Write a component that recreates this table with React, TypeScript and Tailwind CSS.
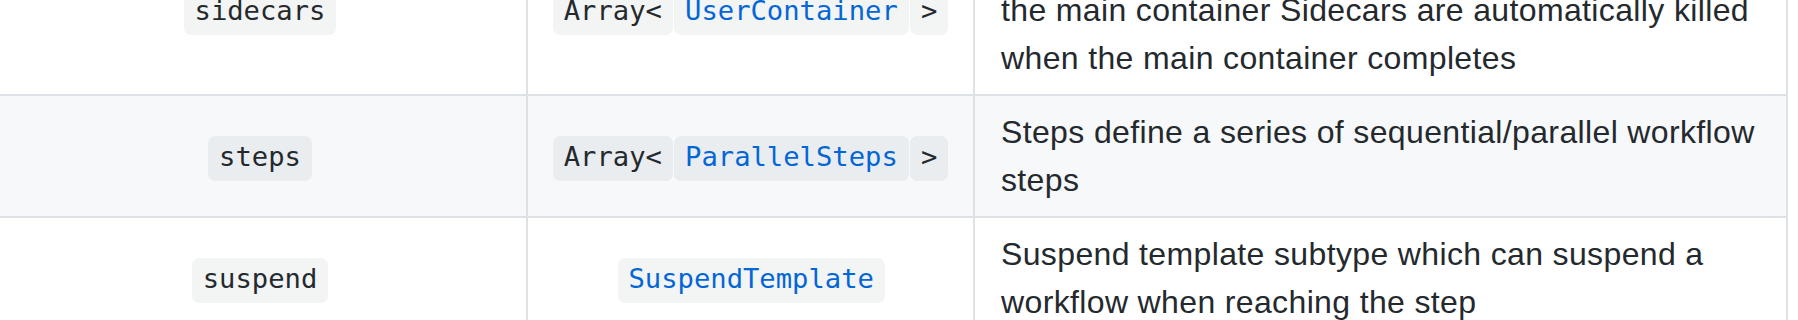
const rows = [
  {
    name: "sidecars",
    type: { wrap: true, ref: "UserContainer" },
    desc: [
      "Sidecars is a list of containers which run alongside",
      "the main container Sidecars are automatically killed",
      "when the main container completes",
    ],
  },
  {
    name: "steps",
    type: { wrap: true, ref: "ParallelSteps" },
    desc: ["Steps define a series of sequential/parallel workflow steps"],
  },
  {
    name: "suspend",
    type: { wrap: false, ref: "SuspendTemplate" },
    desc: ["Suspend template subtype which can suspend a workflow when reaching the step"],
  },
];

const codeCls =
  "font-['DejaVu_Sans_Mono',monospace] text-[27.2px] tracking-normal px-[10.88px] pt-[5.44px] pb-[9px] rounded-[7px] bg-[rgba(27,31,35,0.05)]";

const FieldTable = () => {
  return (
    <div className="bg-white w-[1798px] h-[320px] overflow-hidden">
      <div className="-mt-[74px] -ml-[8px] w-[1796px] border-l-2 border-[#dfe2e5] font-['Liberation_Sans',Arial,sans-serif] text-[32px] leading-[48px] tracking-[0.36px] text-[#24292e]">
        {rows.map((row, i) => (
          <div
            key={row.name}
            className={`grid grid-cols-[534px_447px_813px] border-b-2 border-[#dfe2e5] ${
              i % 2 === 1 ? "bg-[#f6f8fa]" : "bg-white"
            }`}
          >
            {/* Name */}
            <div className="flex items-center justify-center border-r-2 border-[#dfe2e5] px-[26px] py-[12px]">
              <div>
                <code className={codeCls}>{row.name}</code>
              </div>
            </div>

            {/* Type */}
            <div className="flex items-center justify-center border-r-2 border-[#dfe2e5] px-[26px] py-[12px]">
              <div className="whitespace-nowrap">
                {row.type.wrap && <code className={codeCls}>Array&lt;</code>}
                <a href="#" className="text-[#0366d6] ml-[1.4px]">
                  <code className={codeCls}>{row.type.ref}</code>
                </a>
                {row.type.wrap && <code className={`${codeCls} ml-[1.4px]`}>&gt;</code>}
              </div>
            </div>

            {/* Description */}
            <div className="border-r-2 border-[#dfe2e5] px-[26px] py-[12px] flex items-center">
              <div>
                {row.desc.map((line, j) => (
                  <span key={j}>
                    {line}
                    {j < row.desc.length - 1 && <br />}
                  </span>
                ))}
              </div>
            </div>
          </div>
        ))}
      </div>
    </div>
  );
};

export default function App() {
  return <FieldTable />;
}
